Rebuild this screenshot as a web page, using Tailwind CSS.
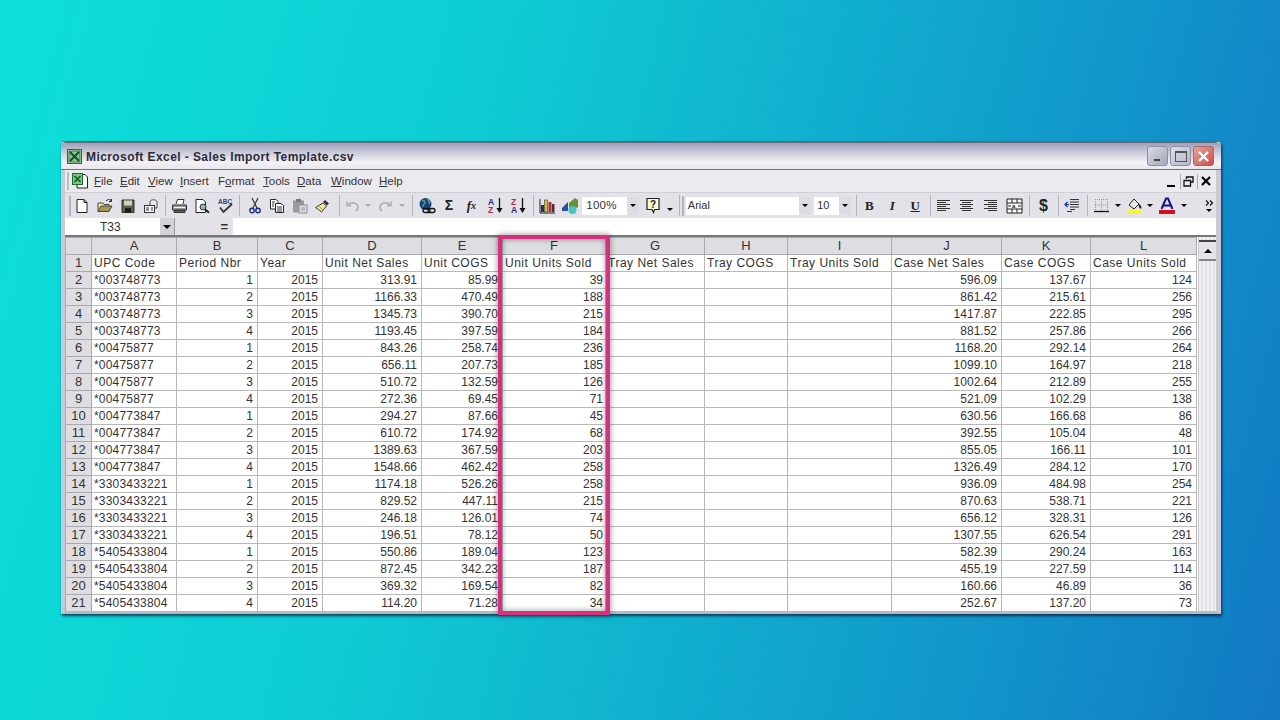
<!DOCTYPE html>
<html lang="en">

<head>
    <meta charset="UTF-8">
    <title>Microsoft Excel - Sales Import Template.csv</title>
    <script src="https://cdn.jsdelivr.net/npm/@tailwindcss/browser@4"></script>
</head>

<body class="w-[1280px] h-[720px] overflow-hidden pt-[141px] pl-[61px] bg-[linear-gradient(105deg,#0de0da_0%,#0fcbd3_35%,#11a6cd_65%,#1279c4_100%)] font-['Liberation_Sans',Arial,sans-serif]">

    <!-- Excel window -->
    <div class="relative w-[1160px] h-[473px] flex flex-col rounded-t-[4px] bg-[#e4e4ea] border-l-[4px] border-r-[5px] border-b-[3px] border-t-[2px] border-l-[#c9cad6] border-r-[#c9cad6] border-b-[#b8b8c4] border-t-[#5e6b78] shadow-[1px_2px_3px_rgba(0,20,50,.75)]">

        <!-- Title bar -->
        <div class="h-[27px] shrink-0 -ml-[4px] -mr-[5px] pl-[6px] pr-[7px] flex items-center bg-[linear-gradient(180deg,#9fa0ba_0%,#c9cad8_35%,#f2f2f6_75%,#e6e6ec_100%)] border-b border-[#777]">
            <svg class="w-[15px] h-[15px] shrink-0" viewBox="0 0 15 15"><rect x=".5" y=".5" width="14" height="14" fill="#d6e8cf" stroke="#2a6a3a"/><rect x="2" y="2" width="11" height="11" fill="#8fc29a" stroke="#2f7d45"/><path d="M3 3l9 9M12 3l-9 9" stroke="#14532d" stroke-width="2"/></svg>
            <span class="ml-[4px] pt-[1px] text-[12px] font-bold tracking-[.42px] text-[#2b2b38]">Microsoft Excel - Sales Import Template.csv</span>
            <div class="ml-auto flex gap-[2px]">
                <div class="w-[21px] h-[20px] rounded-[3px] border border-[#8b8fa5] bg-[linear-gradient(135deg,#d8dae6,#a5a8bb)] flex items-end pl-[6px] pb-[4px]"><div class="w-[6px] h-[2px] bg-[#444]"></div></div>
                <div class="w-[21px] h-[20px] rounded-[3px] border border-[#8b8fa5] bg-[linear-gradient(135deg,#dcdde8,#b4b6c8)] flex items-center justify-center"><div class="w-[12px] h-[11px] border border-[#555] border-t-2"></div></div>
                <div class="w-[21px] h-[20px] rounded-[3px] border border-[#a06a6a] bg-[linear-gradient(135deg,#e8a69c,#c94f4a)] flex items-center justify-center">
                    <svg class="w-[13px] h-[13px]" viewBox="0 0 13 13"><path d="M2 2l9 9M11 2l-9 9" stroke="#fff" stroke-width="2.4"/></svg>
                </div>
            </div>
        </div>

        <!-- Menu bar -->
        <div class="h-[23px] shrink-0 flex items-center text-[11.5px] text-[#333] bg-[#ebebef] border-b border-[#cfcfd6]">
            <div class="w-[2px] h-[18px] ml-[2px] bg-[#bcbcc4]"></div>
            <svg class="w-[18px] h-[18px] ml-[2px] shrink-0" viewBox="0 0 18 18"><path d="M6 2.5h8l2.5 2.5v11H6z" fill="#fff" stroke="#222"/><rect x="1.5" y="1.5" width="10" height="11" fill="#7cc47f" stroke="#1f6b33"/><path d="M3.5 4l6 6M9.5 4l-6 6" stroke="#0f5a28" stroke-width="1.6"/></svg>
            <div class="ml-[5px] pt-[2px] w-[26px]"><u>F</u>ile</div>
            <div class="pt-[2px] w-[28px]"><u>E</u>dit</div>
            <div class="pt-[2px] w-[32px]"><u>V</u>iew</div>
            <div class="pt-[2px] w-[38px]"><u>I</u>nsert</div>
            <div class="pt-[2px] w-[45px]">F<u>o</u>rmat</div>
            <div class="pt-[2px] w-[34px]"><u>T</u>ools</div>
            <div class="pt-[2px] w-[34px]"><u>D</u>ata</div>
            <div class="pt-[2px] w-[48px]"><u>W</u>indow</div>
            <div class="pt-[2px]"><u>H</u>elp</div>
            <div class="ml-auto mr-[2px] flex items-center gap-[1px]">
                <div class="w-[16px] h-[15px] flex items-end justify-center pb-[2px]"><div class="w-[8px] h-[2px] bg-black"></div></div>
                <div class="w-[16px] h-[15px] border-l border-[#aaa] flex items-center justify-center">
                    <svg class="w-[11px] h-[11px]" viewBox="0 0 11 11"><path d="M3.5 3V1h6.500v5H8M1 4.500h6.500V10H1z" fill="none" stroke="#111" stroke-width="1.300"/></svg>
                </div>
                <div class="w-[17px] h-[15px] border-l border-[#aaa] flex items-center justify-center">
                    <svg class="w-[10px] h-[10px]" viewBox="0 0 10 10"><path d="M1 1l8 8M9 1l-8 8" stroke="#000" stroke-width="2.200"/></svg>
                </div>
            </div>
        </div>

        <!-- Toolbar -->
        <div class="h-[25px] shrink-0 flex items-center pl-[4px] bg-[#e2e2e8] text-[#333] [&>svg]:shrink-0">
            <div class="w-[2px] h-[20px] bg-[#b5b5bd]"></div>
            <!-- new -->
            <div class="w-[23px] h-[25px] flex items-center justify-center"><svg class="w-[16px] h-[16px]" viewBox="0 0 16 16"><path d="M3 1.500h7l3 3v10H3zM10 1.500v3h3" fill="#fff" stroke="#222"/></svg></div>
            <!-- open -->
            <div class="w-[23px] h-[25px] flex items-center justify-center"><svg class="w-[17px] h-[16px]" viewBox="0 0 17 16"><path d="M1 13.500V5h5l1 1.500h5v2" fill="#f2e9a8" stroke="#444"/><path d="M1 13.500l3-5.500h11l-3 5.500z" fill="#a59a52" stroke="#444"/><path d="M9 3c2-2 4-2 5.500 0M14.500 1v2.500H12" fill="none" stroke="#222"/></svg></div>
            <!-- save -->
            <div class="w-[23px] h-[25px] flex items-center justify-center"><svg class="w-[16px] h-[16px]" viewBox="0 0 16 16"><path d="M2 2h12v12.500H2z" fill="#5d6244" stroke="#333"/><rect x="4" y="2.500" width="8" height="5" fill="#cfd2bd"/><rect x="5" y="10" width="6" height="4.500" fill="#1c1c1c"/></svg></div>
            <!-- mail -->
            <div class="w-[23px] h-[25px] flex items-center justify-center"><svg class="w-[17px] h-[16px]" viewBox="0 0 17 16"><path d="M7 7V4c0-3 7-3 7 0v6h-3" fill="#e8e8ee" stroke="#555"/><rect x="1.500" y="7.500" width="10" height="7" fill="#f6f6f6" stroke="#333"/><path d="M3 10h3M3 12h3M8 10h2M8 12h2" stroke="#333"/></svg></div>
            <div class="ml-[3px] w-[1px] h-[21px] bg-[#b4b4bc]"></div>
            <!-- print -->
            <div class="ml-[2px] w-[23px] h-[25px] flex items-center justify-center"><svg class="w-[17px] h-[16px]" viewBox="0 0 17 16"><path d="M5 6l1.500-4.500H13L12 6" fill="#fff" stroke="#333"/><path d="M1.500 7h14v5h-14z" fill="#999" stroke="#333"/><path d="M3 12.500h11v2H3z" fill="#666" stroke="#333"/><path d="M3 9.500h11" stroke="#fff"/></svg></div>
            <!-- preview -->
            <div class="w-[23px] h-[25px] flex items-center justify-center"><svg class="w-[17px] h-[16px]" viewBox="0 0 17 16"><path d="M2 1.500h7l2.500 2.500v10.500H2z" fill="#fff" stroke="#222"/><circle cx="9" cy="9" r="3" fill="#8fb8a8" stroke="#333"/><path d="M11 11.200l4 3.500" stroke="#222" stroke-width="2"/></svg></div>
            <!-- spelling -->
            <div class="w-[23px] h-[25px] flex items-center justify-center"><svg class="w-[17px] h-[17px]" viewBox="0 0 17 17"><text x="1" y="6.500" font-size="6.500" font-weight="700" fill="#33406e" font-family="Liberation Sans">ABC</text><path d="M3 10.500l3.500 4.500L15 7" fill="none" stroke="#333" stroke-width="1.800"/></svg></div>
            <div class="ml-[2px] w-[1px] h-[21px] bg-[#b4b4bc]"></div>
            <!-- cut -->
            <div class="ml-[3px] w-[23px] h-[25px] flex items-center justify-center"><svg class="w-[12px] h-[17px]" viewBox="0 0 12 17"><path d="M3 1l5 10M9 1L4 11" stroke="#333" stroke-width="1.200"/><circle cx="3" cy="13.500" r="2.200" fill="none" stroke="#1e2a80" stroke-width="1.400"/><circle cx="9" cy="13.500" r="2.200" fill="none" stroke="#1e2a80" stroke-width="1.400"/></svg></div>
            <!-- copy -->
            <div class="w-[23px] h-[25px] flex items-center justify-center"><svg class="w-[16px] h-[16px]" viewBox="0 0 16 16"><path d="M1.500 1.500H7l2 2v7.500H1.500z" fill="#fff" stroke="#222"/><path d="M6.500 5.500H12l2.500 2v7h-8z" fill="#fff" stroke="#222"/><path d="M3 4h3M3 6h2M3 8h2M8 9h5M8 11h5M8 13h5" stroke="#333"/></svg></div>
            <!-- paste -->
            <div class="w-[23px] h-[25px] flex items-center justify-center"><svg class="w-[16px] h-[16px]" viewBox="0 0 16 16"><rect x="1" y="2.500" width="11" height="12" fill="#9a9aa0"/><rect x="4" y="1" width="5" height="3" fill="#77777d"/><rect x="7" y="7" width="8" height="8" fill="#dcdce2" stroke="#8d8d93"/><path d="M9 10h4M9 12h4" stroke="#9a9aa0"/></svg></div>
            <!-- format painter -->
            <div class="w-[23px] h-[25px] flex items-center justify-center"><svg class="w-[18px] h-[16px]" viewBox="0 0 18 16"><path d="M11 2l4 3.500-2 2-4-3.500z" fill="#333"/><path d="M9 5l3.500 3-5 6L1.500 9.500z" fill="#f0e8a0" stroke="#444"/><path d="M3.500 10.500l3 2.500M5.500 9l3 2.500" stroke="#8a8450"/></svg></div>
            <div class="ml-[4px] w-[1px] h-[21px] bg-[#b4b4bc]"></div>
            <!-- undo / redo, disabled -->
            <div class="ml-[3px] w-[19px] h-[25px] flex items-center justify-center"><svg class="w-[15px] h-[12px]" viewBox="0 0 15 12"><path d="M2 1.500v4h4M2.500 5.500C5 2 11 2 13 6c.5 2 0 3.500-2 5" fill="none" stroke="#b4b4bc" stroke-width="1.800"/></svg></div>
            <div class="w-[14px] flex justify-center"><div class="border-x-[3px] border-t-[3px] border-x-transparent border-t-[#a8a8b0]"></div></div>
            <div class="ml-[1px] w-[19px] h-[25px] flex items-center justify-center"><svg class="w-[15px] h-[12px]" viewBox="0 0 15 12"><path d="M13 1.500v4H9M12.500 5.500C10 2 4 2 2 6c-.5 2 0 3.500 2 5" fill="none" stroke="#b4b4bc" stroke-width="1.800"/></svg></div>
            <div class="w-[14px] flex justify-center"><div class="border-x-[3px] border-t-[3px] border-x-transparent border-t-[#a8a8b0]"></div></div>
            <div class="ml-[3px] w-[1px] h-[21px] bg-[#b4b4bc]"></div>
            <!-- hyperlink -->
            <div class="ml-[2px] w-[23px] h-[25px] flex items-center justify-center"><svg class="w-[18px] h-[18px]" viewBox="0 0 18 18"><circle cx="7.500" cy="7" r="6" fill="#1d3f7a"/><path d="M4 4c2-1 3 0 3 1.500S4 8 5 10M9 2c2 1 3 3 2 5" stroke="#4fa0a0" stroke-width="1.500" fill="none"/><rect x="5" y="11.500" width="7" height="4" rx="2" fill="none" stroke="#111" stroke-width="1.300"/><rect x="10" y="11.500" width="7" height="4" rx="2" fill="none" stroke="#111" stroke-width="1.300"/></svg></div>
            <div class="w-[22px] h-[25px] flex items-center justify-center text-[14px] font-bold text-[#222]">Σ</div>
            <div class="w-[23px] h-[25px] flex items-center justify-center text-[13px] italic font-bold text-[#222] font-['Liberation_Serif',serif]">f<span class="text-[10px]">x</span></div>
            <!-- sort -->
            <div class="w-[23px] h-[25px] flex items-center justify-center"><svg class="ml-[2px] w-[17px] h-[17px]" viewBox="0 0 17 17"><text x="1" y="7.500" font-size="8.500" font-weight="700" fill="#2a2f8f" font-family="Liberation Sans">A</text><text x="1" y="16" font-size="8.500" font-weight="700" fill="#b02a3a" font-family="Liberation Sans">Z</text><path d="M12.500 1v13" stroke="#111" stroke-width="1.300"/><path d="M9.500 11h6l-3 5z" fill="#111"/></svg></div>
            <div class="w-[23px] h-[25px] flex items-center justify-center"><svg class="ml-[3px] w-[17px] h-[17px]" viewBox="0 0 17 17"><text x="1" y="7.500" font-size="8.500" font-weight="700" fill="#b02a3a" font-family="Liberation Sans">Z</text><text x="1" y="16" font-size="8.500" font-weight="700" fill="#2a2f8f" font-family="Liberation Sans">A</text><path d="M12.500 1v13" stroke="#111" stroke-width="1.300"/><path d="M9.500 11h6l-3 5z" fill="#111"/></svg></div>
            <div class="ml-[4px] w-[1px] h-[21px] bg-[#b4b4bc]"></div>
            <!-- chart wizard -->
            <div class="ml-[2px] w-[23px] h-[25px] flex items-center justify-center"><svg class="w-[17px] h-[16px]" viewBox="0 0 17 16"><rect x="2" y="7" width="3" height="7" fill="#2b2b6a"/><rect x="5.500" y="2" width="3" height="12" fill="#d8c040" stroke="#333" stroke-width=".6"/><rect x="9.500" y="4" width="3" height="10" fill="#a8323a"/><rect x="13" y="6" width="2.500" height="8" fill="#5a2a3a"/><path d="M1 1v14h15" fill="none" stroke="#222"/></svg></div>
            <!-- drawing -->
            <div class="w-[24px] h-[25px] flex items-center justify-center"><svg class="w-[18px] h-[18px]" viewBox="0 0 18 18"><path d="M8 6l6-5 3 2v7l-5 3H8z" fill="#6a8f38"/><path d="M1 11l6-6v9H1z" fill="#2a4fa0"/><circle cx="11.500" cy="13" r="4" fill="#46c8c0"/></svg></div>
            <!-- zoom box -->
            <div class="w-[57px] h-[18px] flex items-center bg-white pl-[4px] text-[11.500px] tracking-[.2px]">100%<div class="ml-auto w-[12px] h-[18px] bg-[#dcdce2] flex items-center justify-center"><div class="border-x-[3px] border-t-[3px] border-x-transparent border-t-black"></div></div></div>
            <!-- help -->
            <div class="ml-[3px] w-[22px] h-[25px] flex items-center justify-center"><svg class="w-[16px] h-[17px]" viewBox="0 0 16 17"><path d="M2 1.500h12v11H9.500l-1 3-1.500-3H2z" fill="#fbfbd8" stroke="#222" stroke-width="1.200"/><text x="5" y="10.500" font-size="10" font-weight="700" fill="#222" font-family="Liberation Sans">?</text></svg></div>
            <div class="w-[12px] pt-[7px] flex justify-center"><div class="border-x-[3px] border-t-[3px] border-x-transparent border-t-black"></div></div>
            <div class="ml-[3px] w-[1px] h-[21px] bg-[#b4b4bc]"></div>
            <div class="ml-[2px] w-[2px] h-[20px] bg-[#b5b5bd]"></div>
            <!-- font name and size -->
            <div class="ml-[2px] w-[126px] h-[18px] flex items-center bg-white pl-[2px] text-[11px]">Arial<div class="ml-auto w-[12px] h-[18px] bg-[#dcdce2] flex items-center justify-center"><div class="border-x-[3px] border-t-[3px] border-x-transparent border-t-black"></div></div></div>
            <div class="ml-[3px] w-[37px] h-[18px] flex items-center bg-white pl-[3px] text-[11px]">10<div class="ml-auto w-[12px] h-[18px] bg-[#dcdce2] flex items-center justify-center"><div class="border-x-[3px] border-t-[3px] border-x-transparent border-t-black"></div></div></div>
            <div class="ml-[5px] w-[1px] h-[21px] bg-[#b4b4bc]"></div>
            <!-- bold italic underline -->
            <div class="ml-[1px] w-[23px] text-center text-[13px] font-bold text-[#222] font-['Liberation_Serif',serif]">B</div>
            <div class="w-[23px] text-center text-[13px] font-bold italic text-[#222] font-['Liberation_Serif',serif]">I</div>
            <div class="w-[23px] text-center text-[13px] font-bold underline text-[#222] font-['Liberation_Serif',serif]">U</div>
            <div class="ml-[3px] w-[1px] h-[21px] bg-[#b4b4bc]"></div>
            <!-- alignment -->
            <div class="ml-[1px] w-[24px] h-[25px] flex items-center justify-center"><svg class="w-[15px] h-[13px]" viewBox="0 0 15 13"><path d="M1 1.500h13M1 3.500h9M1 5.500h13M1 7.500h9M1 9.500h13M1 11.500h9" stroke="#333"/></svg></div>
            <div class="w-[23px] h-[25px] flex items-center justify-center"><svg class="w-[15px] h-[13px]" viewBox="0 0 15 13"><path d="M1 1.500h13M3 3.500h9M1 5.500h13M3 7.500h9M1 9.500h13M3 11.500h9" stroke="#333"/></svg></div>
            <div class="w-[24px] h-[25px] flex items-center justify-center"><svg class="w-[15px] h-[13px]" viewBox="0 0 15 13"><path d="M1 1.500h13M5 3.500h9M1 5.500h13M5 7.500h9M1 9.500h13M5 11.500h9" stroke="#333"/></svg></div>
            <div class="w-[24px] h-[25px] flex items-center justify-center"><svg class="w-[17px] h-[16px]" viewBox="0 0 17 16"><path d="M1 1h15v14H1zM1 5h15M1 11h15M6 1v4M11 1v4M6 11v4M11 11v4" fill="#fff" stroke="#222"/><text x="6" y="10" font-size="6" font-weight="700" fill="#222" font-family="Liberation Sans">a</text><path d="M2 8h3M15 8h-3" stroke="#222"/></svg></div>
            <div class="ml-[3px] w-[1px] h-[21px] bg-[#b4b4bc]"></div>
            <div class="ml-[2px] w-[23px] text-center text-[16px] font-bold text-[#222]">$</div>
            <div class="ml-[3px] w-[1px] h-[21px] bg-[#b4b4bc]"></div>
            <!-- indent -->
            <div class="ml-[2px] w-[23px] h-[25px] flex items-center justify-center"><svg class="w-[16px] h-[15px]" viewBox="0 0 16 15"><path d="M6 1.500h9M6 4h9M6 6.500h9M6 9h9M6 11.500h5M3 13.500h5" stroke="#333"/><path d="M1 6.500h4" stroke="#1e3a9a" stroke-width="1.300"/><path d="M3.500 4L1 6.500 3.500 9" fill="none" stroke="#1e3a9a" stroke-width="1.300"/></svg></div>
            <div class="ml-[3px] w-[1px] h-[21px] bg-[#b4b4bc]"></div>
            <!-- borders -->
            <div class="ml-[3px] w-[22px] h-[25px] flex items-center justify-center"><svg class="w-[15px] h-[15px]" viewBox="0 0 15 15"><path d="M1.500 1v11M7.500 1v11M13.500 1v11M1 1.500h13M1 7h13" stroke="#999" stroke-dasharray="1 1"/><path d="M0 13.500h15" stroke="#111" stroke-width="1.300"/></svg></div>
            <div class="w-[10px] flex justify-center"><div class="border-x-[3px] border-t-[3px] border-x-transparent border-t-black"></div></div>
            <!-- fill colour -->
            <div class="ml-[1px] w-[22px] h-[25px] flex items-center justify-center"><svg class="w-[18px] h-[18px]" viewBox="0 0 18 18"><path d="M3 8l5-6 5 5-5 5z" fill="#e8e8e8" stroke="#222"/><path d="M13 7c2 1 3 3 2 5-2-1-3-3-2-5z" fill="#222"/><rect x="1" y="13" width="15" height="4" fill="#f5f53c"/></svg></div>
            <div class="w-[10px] flex justify-center"><div class="border-x-[3px] border-t-[3px] border-x-transparent border-t-black"></div></div>
            <!-- font colour -->
            <div class="ml-[1px] w-[22px] h-[25px] flex items-center justify-center"><svg class="w-[16px] h-[18px]" viewBox="0 0 16 18"><path d="M2.500 12L7 1.500h2L13.500 12M4.500 8.500h7" fill="none" stroke="#14148a" stroke-width="2"/><rect x="0" y="13" width="16" height="4" fill="#d01020"/></svg></div>
            <div class="w-[12px] flex justify-center"><div class="border-x-[3px] border-t-[3px] border-x-transparent border-t-black"></div></div>
            <!-- more -->
            <div class="ml-[12px] w-[14px] h-[25px] flex flex-col items-center justify-center gap-[3px]">
                <svg class="w-[9px] h-[6px]" viewBox="0 0 9 6"><path d="M1 .5L3.500 3 1 5.500M5 .5L7.500 3 5 5.500" fill="none" stroke="#111" stroke-width="1.200"/></svg>
                <div class="border-x-[3px] border-t-[3px] border-x-transparent border-t-black"></div>
            </div>
        </div>

        <!-- Formula bar -->
        <div class="h-[19px] shrink-0 flex border-b-2 border-[#777] bg-[#e2e2e8]">
            <div class="w-[95px] bg-white text-[12px] text-[#333] pl-[35px] leading-[18px]">T33</div>
            <div class="w-[15px] flex items-center justify-center bg-[#d2d2d8] border-r border-[#999]"><div class="border-x-[4px] border-t-[4px] border-x-transparent border-t-black"></div></div>
            <div class="w-[58px] text-right pr-[5px] text-[13px] font-bold leading-[17px] text-[#333]">=</div>
            <div class="flex-1 bg-white"></div>
        </div>

        <!-- Sheet: table and vertical scrollbar -->
        <div class="flex-1 min-h-0 flex bg-white overflow-hidden">
            <table class="w-[1131px] h-fit table-fixed border-collapse shrink-0 text-[12px] leading-[16px] text-[#333]">
                <colgroup>
                    <col class="w-[26px]"><col class="w-[85px]"><col class="w-[81px]"><col class="w-[65px]"><col class="w-[99px]"><col class="w-[81px]"><col class="w-[103px]"><col class="w-[99px]"><col class="w-[83px]"><col class="w-[104px]"><col class="w-[110px]"><col class="w-[89px]"><col class="w-[106px]">
                </colgroup>
                <tbody id="sheet"></tbody>
            </table>
            <!-- scrollbar -->
            <div class="w-[20px] ml-[1px] bg-[repeating-linear-gradient(90deg,#f0f0f3_0,#f0f0f3_2px,#e2e2e7_2px,#e2e2e7_4px)] border-l border-[#ccc]">
                <div class="h-[2px] mt-[3px] bg-[#444]"></div>
                <div class="h-[19px] bg-[#e4e4ea] border-b-2 border-[#888] flex items-center justify-center"><div class="border-x-[4px] border-b-[4px] border-x-transparent border-b-black"></div></div>
            </div>
        </div>

        <!-- Highlight around column F -->
        <div class="absolute left-[433px] top-[92px] w-[112px] h-[380px] border-[4px] border-[#d8307f] shadow-[0_0_6px_rgba(0,0,0,.45),inset_0_0_6px_rgba(0,0,0,.4)] pointer-events-none"></div>
    </div>

    <script>
        const headers = ["", "A", "B", "C", "D", "E", "F", "G", "H", "I", "J", "K", "L"];
        const labels = ["UPC Code", "Period Nbr", "Year", "Unit Net Sales", "Unit COGS", "Unit Units Sold", "Tray Net Sales", "Tray COGS", "Tray Units Sold", "Case Net Sales", "Case COGS", "Case Units Sold"];
        // upc, period, unit sales, unit cogs, units, case sales, case cogs, case units
        const rows = [
            ["*003748773", 1, "313.91", "85.99", 39, "596.09", "137.67", 124],
            ["*003748773", 2, "1166.33", "470.49", 188, "861.42", "215.61", 256],
            ["*003748773", 3, "1345.73", "390.70", 215, "1417.87", "222.85", 295],
            ["*003748773", 4, "1193.45", "397.59", 184, "881.52", "257.86", 266],
            ["*00475877", 1, "843.26", "258.74", 236, "1168.20", "292.14", 264],
            ["*00475877", 2, "656.11", "207.73", 185, "1099.10", "164.97", 218],
            ["*00475877", 3, "510.72", "132.59", 126, "1002.64", "212.89", 255],
            ["*00475877", 4, "272.36", "69.45", 71, "521.09", "102.29", 138],
            ["*004773847", 1, "294.27", "87.66", 45, "630.56", "166.68", 86],
            ["*004773847", 2, "610.72", "174.92", 68, "392.55", "105.04", 48],
            ["*004773847", 3, "1389.63", "367.59", 203, "855.05", "166.11", 101],
            ["*004773847", 4, "1548.66", "462.42", 258, "1326.49", "284.12", 170],
            ["*3303433221", 1, "1174.18", "526.26", 258, "936.09", "484.98", 254],
            ["*3303433221", 2, "829.52", "447.11", 215, "870.63", "538.71", 221],
            ["*3303433221", 3, "246.18", "126.01", 74, "656.12", "328.31", 126],
            ["*3303433221", 4, "196.51", "78.12", 50, "1307.55", "626.54", 291],
            ["*5405433804", 1, "550.86", "189.04", 123, "582.39", "290.24", 163],
            ["*5405433804", 2, "872.45", "342.23", 187, "455.19", "227.59", 114],
            ["*5405433804", 3, "369.32", "169.54", 82, "160.66", "46.89", 36],
            ["*5405433804", 4, "114.20", "71.28", 34, "252.67", "137.20", 73],
        ];

        const headCell = "h-[17px] p-0 bg-[#dedee2] border border-[#a8a8ae] font-normal text-center text-[13px]";
        const labelCell = "h-[17px] p-0 pl-[2px] border border-[#b8b8b8] whitespace-nowrap overflow-hidden tracking-[.5px]";
        const textCell = "h-[17px] p-0 pl-[2px] border border-[#b8b8b8] whitespace-nowrap overflow-hidden tracking-[.2px]";
        const numCell = "h-[17px] p-0 pr-[4px] border border-[#b8b8b8] text-right whitespace-nowrap overflow-hidden";
        const unitsCell = "h-[17px] p-0 pr-[2px] border border-[#b8b8b8] text-right whitespace-nowrap overflow-hidden";

        let html = "<tr>" + headers.map(h => `<td class="${headCell}">${h}</td>`).join("") + "</tr>";
        html += `<tr><td class="${headCell}">1</td>` + labels.map(l => `<td class="${labelCell}">${l}</td>`).join("") + "</tr>";
        rows.forEach((r, i) => {
            const nums = [r[1], 2015, r[2], r[3], r[4], "", "", "", r[5], r[6], r[7]];
            html += `<tr><td class="${headCell}">${i + 2}</td><td class="${textCell}">${r[0]}</td>`
                + nums.map((n, c) => `<td class="${c === 4 ? unitsCell : numCell}">${n}</td>`).join("") + "</tr>";
        });
        document.getElementById("sheet").innerHTML = html;
    </script>
</body>

</html>
